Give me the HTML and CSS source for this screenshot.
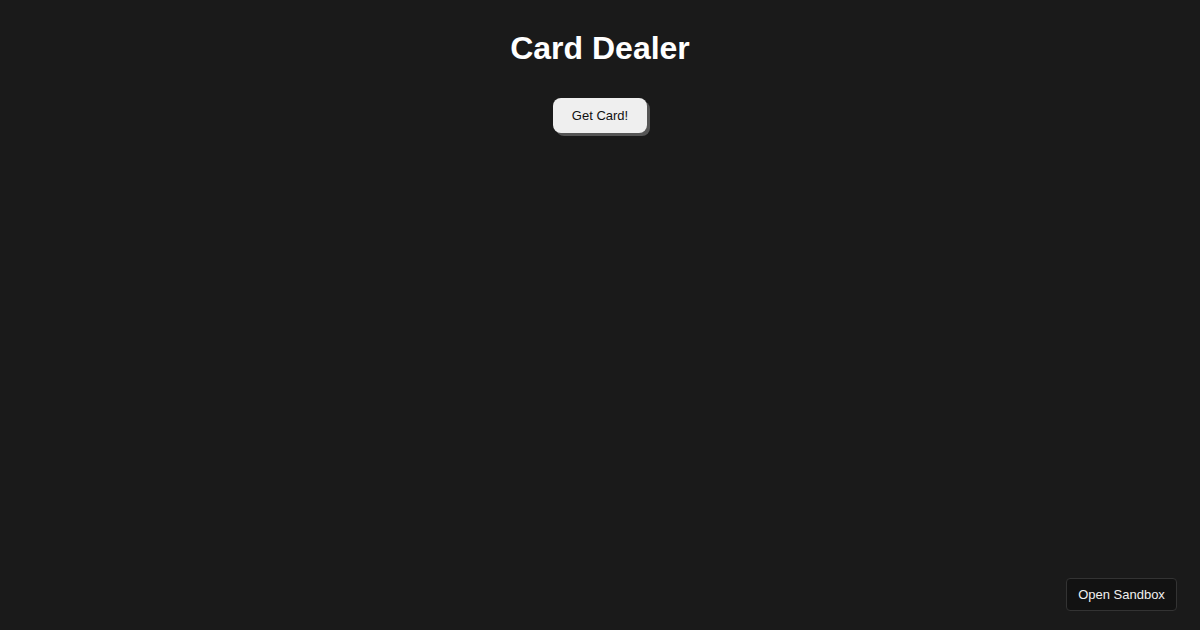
FILE: index.html
```html
<!DOCTYPE html>
<html lang="en">
<head>
<meta charset="utf-8">
<title>Card Dealer</title>
<link rel="stylesheet" href="styles.css">
</head>
<body>
<main class="app">
  <h1 class="title">Card Dealer</h1>
  <button class="deal-btn" type="button">Get Card!</button>
</main>
<button class="sandbox-btn" type="button">Open Sandbox</button>
</body>
</html>
```

FILE: styles.css
```css
html, body {
  margin: 0;
  padding: 0;
  height: 100%;
}
body {
  background: #1a1a1a;
  font-family: "Liberation Sans", Arial, sans-serif;
  color: #fff;
  overflow: hidden;
}
.app {
  display: flex;
  flex-direction: column;
  align-items: center;
  padding-top: 30px;
}
.title {
  margin: 0 0 31px;
  font-size: 32px;
  line-height: 37px;
  font-weight: 700;
  color: #fff;
}
.deal-btn {
  box-sizing: border-box;
  white-space: nowrap;
  font-family: "Liberation Sans", Arial, sans-serif;
  font-size: 13px;
  line-height: 15px;
  padding: 10px 0;
  width: 94px;
  height: 35px;
  border: none;
  border-radius: 8px;
  background: #efefef;
  color: #111;
  box-shadow: 3px 3px 0 #555;
}
.sandbox-btn {
  position: fixed;
  right: 23px;
  bottom: 19px;
  box-sizing: border-box;
  width: 111px;
  height: 33px;
  padding: 0;
  font-family: "Liberation Sans", Arial, sans-serif;
  font-size: 13px;
  color: #f0f0f0;
  background: #121212;
  border: 1px solid #333;
  border-radius: 4px;
}
```
